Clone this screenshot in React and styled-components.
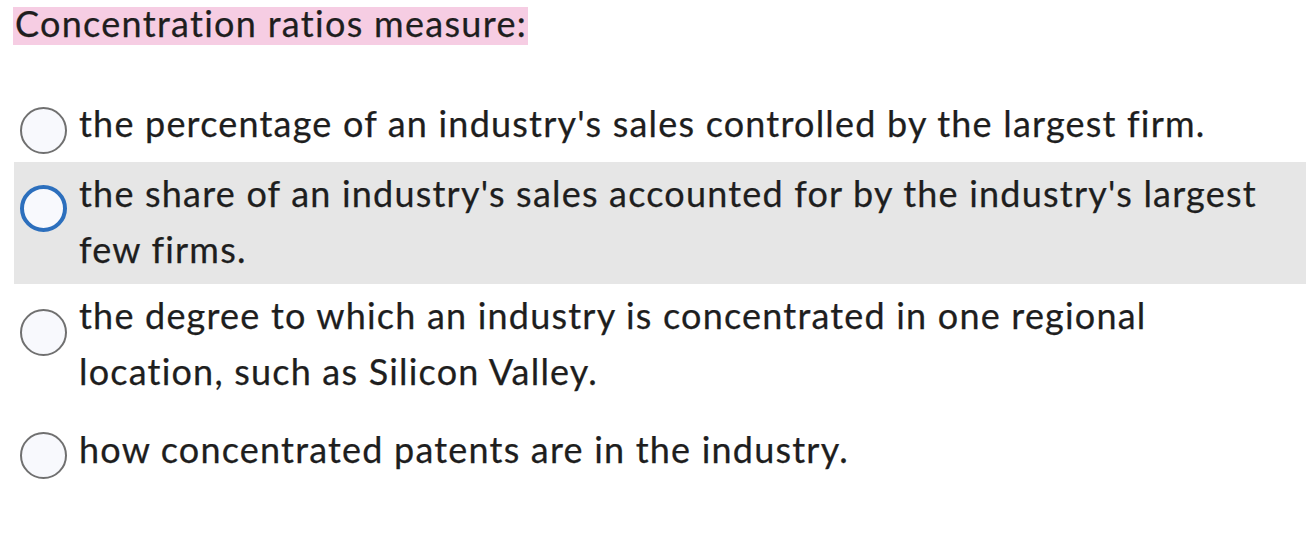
import React from "react";
import styled, { createGlobalStyle } from "styled-components";

const Global = createGlobalStyle`
  html, body { margin: 0; padding: 0; background: #ffffff; }
  body {
    font-family: Lato, "Open Sans", sans-serif;
    color: #1e1e1e;
    font-variant-ligatures: none;
    font-feature-settings: "liga" 0, "clig" 0;
  }
`;

const Page = styled.div`
  padding: 7px 0 0 13px;
  width: 1293px;
`;

const Title = styled.div`
  height: 38px;
`;

const Highlight = styled.span`
  display: inline-block;
  box-sizing: border-box;
  height: 38px;
  background: #f6cde3;
  font-size: 36px;
  line-height: 32px;
  letter-spacing: 1.3px;
  padding: 0 1px 0 2px;
  color: #1e1e1e;
  -webkit-text-stroke: 0.25px #1e1e1e;
`;

const Options = styled.div`
  margin-top: 47px;
  display: flex;
  flex-direction: column;
`;

const Option = styled.label`
  display: flex;
  align-items: flex-start;
  gap: 12px;
  padding: 3px 38px 7px 6px;
  margin-left: 1px;
  margin-top: ${(p) => p.$space}px;
  background: ${(p) => (p.$hover ? "#e6e6e6" : "transparent")};
  cursor: pointer;
`;

const Radio = styled.span`
  flex: none;
  box-sizing: border-box;
  width: 47px;
  height: 47px;
  border-radius: 50%;
  background: #f8f9fd;
  border: ${(p) => (p.$focus ? "4px solid #2c6fbd" : "2px solid #707070")};
  margin-top: ${(p) => p.$offset}px;
`;

const Text = styled.span`
  font-size: 36px;
  line-height: 56px;
  letter-spacing: 1.2px;
  color: #1e1e1e;
  -webkit-text-stroke: 0.25px #1e1e1e;
`;

const options = [
  { text: "the percentage of an industry's sales controlled by the largest firm.", space: 0, offset: 12 },
  { text: "the share of an industry's sales accounted for by the industry's largest few firms.", space: 1, offset: 20, hover: true, focus: true },
  { text: "the degree to which an industry is concentrated in one regional location, such as Silicon Valley.", space: 0, offset: 22 },
  { text: "how concentrated patents are in the industry.", space: 12, offset: 11 },
];

export default function App() {
  return (
    <>
      <Global />
      <Page>
        <Title>
          <Highlight>Concentration ratios measure:</Highlight>
        </Title>
        <Options>
          {options.map((o, i) => (
            <Option key={i} $space={o.space} $hover={o.hover}>
              <Radio $focus={o.focus} $offset={o.offset} />
              <Text>{o.text}</Text>
            </Option>
          ))}
        </Options>
      </Page>
    </>
  );
}
